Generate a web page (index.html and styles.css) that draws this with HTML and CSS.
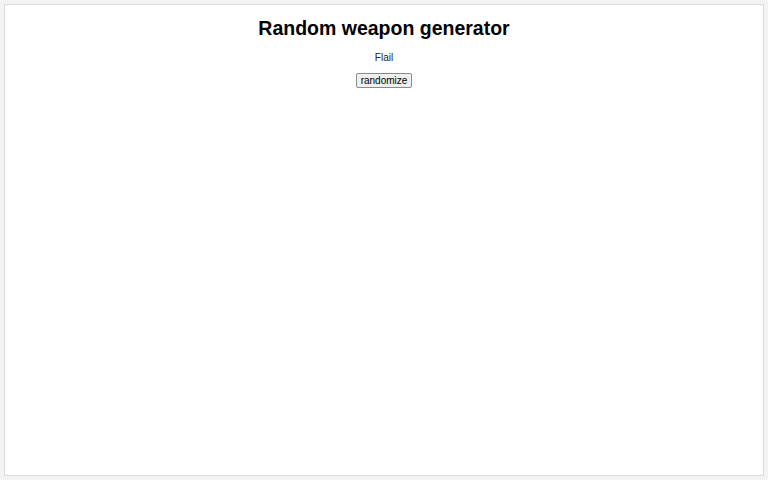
FILE: index.html
```html
<!DOCTYPE html>
<html lang="en">
<head>
    <meta charset="UTF-8">
    <meta name="viewport" content="width=device-width, initial-scale=1.0">
    <title>Random weapon generator</title>
    <link rel="stylesheet" href="styles.css">
</head>
<body>

    <!-- Generator box -->
    <div id="generator">
        <h1>Random weapon generator</h1>
        <p id="weapon">Flail</p>
        <button class="randomize-button" onclick="randomize()">randomize</button>
    </div>

    <script>
        var weapons = ['Sword', 'Axe', 'Mace', 'Flail', 'Spear', 'Dagger', 'Bow', 'Halberd', 'Warhammer'];

        // Pick a new weapon and show it
        function randomize() {
            var i = Math.floor(Math.random() * weapons.length);
            document.getElementById('weapon').textContent = weapons[i];
        }
    </script>

</body>
</html>
```

FILE: styles.css
```css
body {
    font-family: 'Liberation Sans', Arial, sans-serif;
    background-color: #f3f3f3;
    margin: 0;
    padding: 4px;
    height: 100vh;
    box-sizing: border-box;
}

#generator {
    background-color: white;
    border: 1px solid #dcdcdc;
    height: 100%;
    box-sizing: border-box;
    text-align: center;
    padding-top: 12px;
}

h1 {
    font-size: 19.5px;
    margin: 0 0 11.5px 0;
    color: #000;
}

#weapon {
    font-size: 10px;
    margin: 0 0 7px 0;
    color: #222;
}

.randomize-button {
    font-family: 'Liberation Sans', Arial, sans-serif;
    font-size: 10px;
    padding: 1px 4px;
    background-color: #efefef;
    border: 1px solid #8a8a8a;
    border-radius: 2px;
    color: #000;
}
```
